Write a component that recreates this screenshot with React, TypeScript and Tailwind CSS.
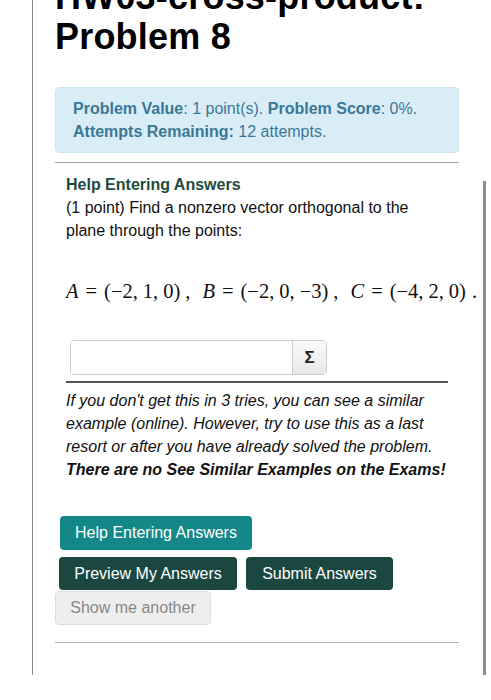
export default function App() {
  const eq = "mx-[7px]";
  const sep = "ml-[5px] mr-[12px]";
  const c = "mr-[5px]";
  return (
    <div className="relative min-h-[700px] bg-white font-['Liberation_Sans',Arial,sans-serif] text-[#111]">
      <div className="ml-[32px] min-h-[698px] w-[427px] border-l border-[#8a8a8a] pl-[22px]">
        <h1 className="-mt-[23px] text-[36px] font-bold leading-[40px] tracking-[0.2px] text-black">
          HW03-cross-product:
          <br />
          Problem 8
        </h1>

        <div className="mt-[30px] rounded-[4px] border border-[#cfe6f1] bg-[#d9edf7] px-[17px] py-[9px] text-[16px] leading-[23px] text-[#3a7898]">
          <div>
            <b>Problem Value</b>: 1 point(s). <b>Problem Score</b>: 0%.
          </div>
          <div>
            <b>Attempts Remaining:</b> 12 attempts.
          </div>
        </div>

        <div className="mt-[9px] h-px bg-[#a8a8a8]" />

        <div className="pl-[11px] text-[16px] leading-[23px]">
          <div className="mt-[10px] font-bold text-[#1f4b41]">Help Entering Answers</div>
          <p className="w-[360px]">(1 point) Find a nonzero vector orthogonal to the plane through the points:</p>

          <div className="mt-[34px] flex whitespace-nowrap font-['Liberation_Serif',serif] text-[20.5px] leading-[30px]">
            <i>A</i>
            <span className={eq}>=</span>
            <span>(−2,</span>
            <span className={`ml-[5px] ${c}`}>1,</span>
            <span>0)</span>
            <span className={sep}>,</span>
            <i>B</i>
            <span className={eq}>=</span>
            <span className={c}>(−2,</span>
            <span className={c}>0,</span>
            <span>−3)</span>
            <span className={sep}>,</span>
            <i>C</i>
            <span className={eq}>=</span>
            <span className={c}>(−4,</span>
            <span className={c}>2,</span>
            <span>0)</span>
            <span className="ml-[6px]">.</span>
          </div>

          <div className="mt-[34px] ml-[4px] flex h-[35px] w-[257px] overflow-hidden rounded-[4px] border border-[#cccccc] shadow-[inset_0_1px_1px_rgba(0,0,0,0.06)]">
            <div className="flex-1 bg-white" />
            <div className="flex w-[34px] items-center justify-center border-l border-[#cccccc] bg-gradient-to-b from-[#fafafa] to-[#e8e8e8] text-[17px] font-bold text-[#222]">
              Σ
            </div>
          </div>
          <div className="mt-[6px] h-[2px] w-[382px] bg-[#555]" />

          <p className="mt-[6px] w-[390px] italic text-[#111]">
            If you don't get this in 3 tries, you can see a similar example (online). However, try to use this as a last
            resort or after you have already solved the problem.{" "}
            <b>There are no See Similar Examples on the Exams!</b>
          </p>
        </div>

        <div className="mt-[35px] text-[16px]">
          <button className="ml-[5px] h-[34px] w-[192px] rounded-[4px] bg-[#148888] text-white">
            Help Entering Answers
          </button>
          <div className="mt-[7px] ml-[4px] flex gap-[9px]">
            <button className="h-[33px] w-[178px] rounded-[4px] bg-[#1b4741] text-white">Preview My Answers</button>
            <button className="h-[33px] w-[147px] rounded-[4px] bg-[#1b4741] text-white">Submit Answers</button>
          </div>
          <button className="mt-[1px] h-[34px] w-[156px] rounded-[4px] border border-[#dddddd] bg-[#eeeeee] text-[#888]">
            Show me another
          </button>
        </div>

        <div className="mt-[17px] h-px bg-[#b5b5b5]" />
      </div>

      <div className="absolute left-[483px] top-[204px] h-[494px] w-[3px] bg-[#8c8c8c]" />
    </div>
  );
}
